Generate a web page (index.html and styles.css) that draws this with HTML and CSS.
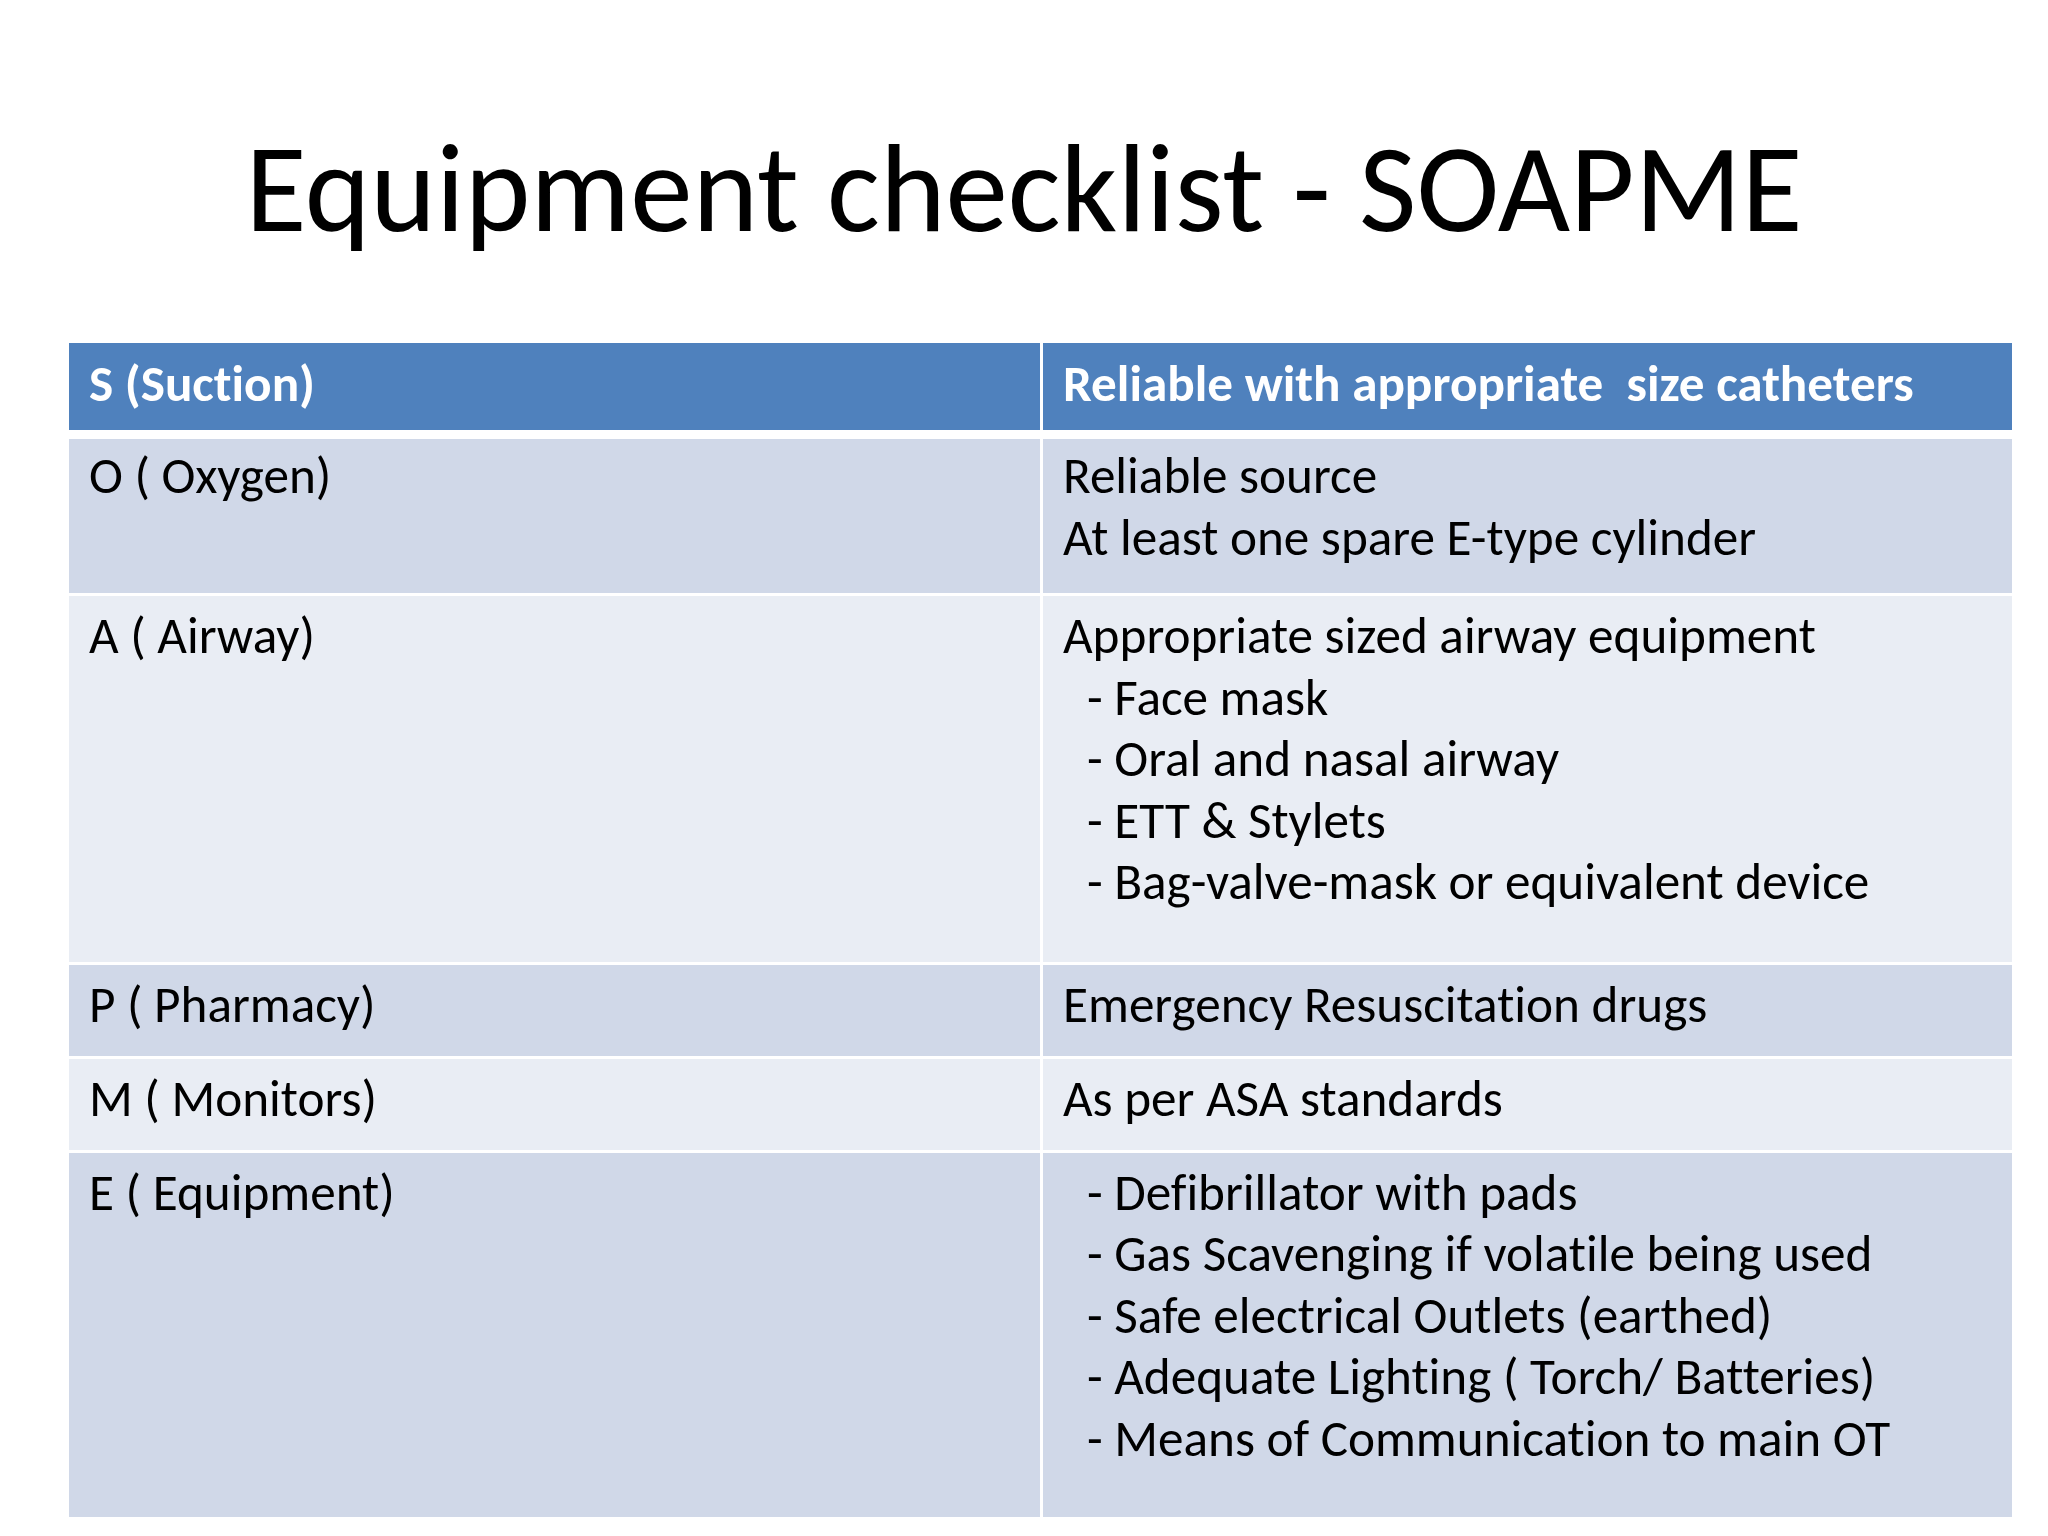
FILE: index.html
```html
<!DOCTYPE html>
<html lang="en">
<head>
<meta charset="utf-8">
<title>Equipment checklist - SOAPME</title>
<link rel="stylesheet" href="styles.css">
</head>
<body>
<main class="slide">
  <h1 class="title">Equipment checklist - SOAPME</h1>
  <div class="table">
    <div class="row head">
      <div class="cell">S (Suction)</div>
      <div class="cell">Reliable with appropriate&nbsp; size catheters</div>
    </div>
    <div class="row band row-o">
      <div class="cell">O ( Oxygen)</div>
      <div class="cell"><p>Reliable source</p><p>At least one spare E-type cylinder</p></div>
    </div>
    <div class="row plain row-a">
      <div class="cell">A ( Airway)</div>
      <div class="cell">
        <p>Appropriate sized airway equipment</p>
        <p class="item">- Face mask</p>
        <p class="item">- Oral and nasal airway</p>
        <p class="item">- ETT &amp; Stylets</p>
        <p class="item">- Bag-valve-mask or equivalent device</p>
      </div>
    </div>
    <div class="row band row-p">
      <div class="cell">P ( Pharmacy)</div>
      <div class="cell">Emergency Resuscitation drugs</div>
    </div>
    <div class="row plain row-m">
      <div class="cell">M ( Monitors)</div>
      <div class="cell">As per ASA standards</div>
    </div>
    <div class="row band row-e">
      <div class="cell">E ( Equipment)</div>
      <div class="cell">
        <p class="item">- Defibrillator with pads</p>
        <p class="item">- Gas Scavenging if volatile being used</p>
        <p class="item">- Safe electrical Outlets (earthed)</p>
        <p class="item">- Adequate Lighting ( Torch/ Batteries)</p>
        <p class="item">- Means of Communication to main OT</p>
      </div>
    </div>
  </div>
</main>
</body>
</html>
```
FILE: styles.css
```css
html, body {
  margin: 0;
  padding: 0;
  background: #ffffff;
}

.slide {
  width: 2048px;
  height: 1536px;
  box-sizing: border-box;
  padding-top: 114px;
  font-family: "Carlito", "Lato", "Liberation Sans", sans-serif;
  font-variant-ligatures: none;
  color: #000000;
  overflow: hidden;
}

.title {
  margin: 0 0 78.7px 0;
  font-size: 125px;
  font-weight: 400;
  line-height: 150px;
  text-align: center;
}

.table {
  width: 1943px;
  margin-left: 69px;
  display: flex;
  flex-direction: column;
  gap: 3px;
}

.row {
  display: grid;
  grid-template-columns: 971px 969px;
  column-gap: 3px;
}

.cell {
  box-sizing: border-box;
  padding: 9px 20px 0 20px;
  font-size: 51.2px;
  line-height: 61.5px;
}

.cell p {
  margin: 0;
}

.cell .item {
  padding-left: 24px;
}

.head {
  height: 87.5px;
  margin-bottom: 5.5px;
}

.head .cell {
  background: #4f81bd;
  color: #ffffff;
  font-weight: 700;
  padding-top: 10px;
}

.band .cell {
  background: #d0d8e8;
}

.plain .cell {
  background: #e9edf4;
}

.row-o {
  height: 154.5px;
}

.row-o .cell {
  padding-top: 6.5px;
  line-height: 62.3px;
}

.row-a {
  height: 366px;
}

.row-p {
  height: 90.5px;
}

.row-m {
  height: 91px;
}

.row-e {
  height: 364.5px;
}
```
